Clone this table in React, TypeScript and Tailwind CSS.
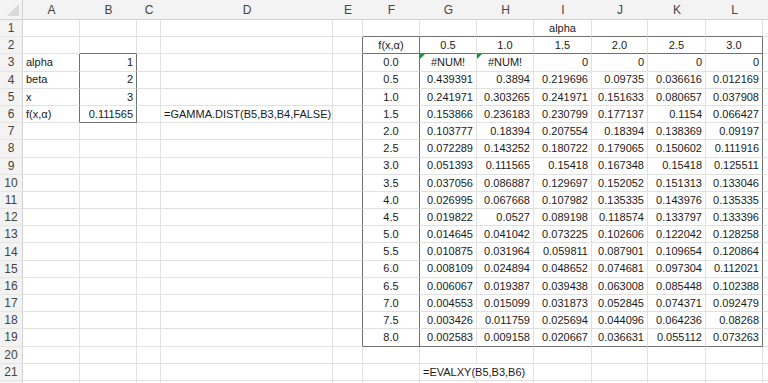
import type { ReactNode } from "react";

const cols = ["A", "B", "C", "D", "E", "F", "G", "H", "I", "J", "K", "L", "M"];

const alphas = ["0.5", "1.0", "1.5", "2.0", "2.5", "3.0"];

// rows 3..19 of the f(x,α) table: x, then one value per alpha
const table: string[][] = [
  ["0.0", "#NUM!", "#NUM!", "0", "0", "0", "0"],
  ["0.5", "0.439391", "0.3894", "0.219696", "0.09735", "0.036616", "0.012169"],
  ["1.0", "0.241971", "0.303265", "0.241971", "0.151633", "0.080657", "0.037908"],
  ["1.5", "0.153866", "0.236183", "0.230799", "0.177137", "0.1154", "0.066427"],
  ["2.0", "0.103777", "0.18394", "0.207554", "0.18394", "0.138369", "0.09197"],
  ["2.5", "0.072289", "0.143252", "0.180722", "0.179065", "0.150602", "0.111916"],
  ["3.0", "0.051393", "0.111565", "0.15418", "0.167348", "0.15418", "0.125511"],
  ["3.5", "0.037056", "0.086887", "0.129697", "0.152052", "0.151313", "0.133046"],
  ["4.0", "0.026995", "0.067668", "0.107982", "0.135335", "0.143976", "0.135335"],
  ["4.5", "0.019822", "0.0527", "0.089198", "0.118574", "0.133797", "0.133396"],
  ["5.0", "0.014645", "0.041042", "0.073225", "0.102606", "0.122042", "0.128258"],
  ["5.5", "0.010875", "0.031964", "0.059811", "0.087901", "0.109654", "0.120864"],
  ["6.0", "0.008109", "0.024894", "0.048652", "0.074681", "0.097304", "0.112021"],
  ["6.5", "0.006067", "0.019387", "0.039438", "0.063008", "0.085448", "0.102388"],
  ["7.0", "0.004553", "0.015099", "0.031873", "0.052845", "0.074371", "0.092479"],
  ["7.5", "0.003426", "0.011759", "0.025694", "0.044096", "0.064236", "0.08268"],
  ["8.0", "0.002583", "0.009158", "0.020667", "0.036631", "0.055112", "0.073263"],
];

const params: Record<number, [string, string]> = {
  3: ["alpha", "1"],
  4: ["beta", "2"],
  5: ["x", "3"],
  6: ["f(x,α)", "0.111565"],
};

type Align = "left" | "right" | "center";

type CellData = { text?: string; align?: Align; warn?: boolean; span?: number };

const tableCols = ["F", "G", "H", "I", "J", "K", "L"];

function getCell(r: number, c: string): CellData | null {
  if (r === 21 && c === "H") return null; // covered by G21
  if (r === 21 && c === "G") return { text: "=EVALXY(B5,B3,B6)", align: "left", span: 2 };
  if (params[r] && c === "A") return { text: params[r][0], align: "left" };
  if (params[r] && c === "B") return { text: params[r][1], align: "right" };
  if (r === 6 && c === "D") return { text: "=GAMMA.DIST(B5,B3,B4,FALSE)", align: "left" };
  if (r === 1 && c === "I") return { text: "alpha", align: "center" };
  if (r === 2 && c === "F") return { text: "f(x,α)", align: "center" };
  if (r === 2 && tableCols.includes(c) && c !== "F")
    return { text: alphas[tableCols.indexOf(c) - 1], align: "center" };
  if (r >= 3 && r <= 19 && tableCols.includes(c)) {
    const row = table[r - 3];
    const i = tableCols.indexOf(c);
    if (i === 0) return { text: row[0], align: "center" };
    const v = row[i];
    if (v === "#NUM!") return { text: v, align: "center", warn: true };
    return { text: v, align: "right" };
  }
  return {};
}

function darkRight(r: number, c: string) {
  if ((c === "A" || c === "B") && r >= 3 && r <= 6) return true;
  if ((c === "E" || c === "F" || c === "L") && r >= 2 && r <= 19) return true;
  return false;
}

function darkBottom(r: number, c: string) {
  if (c === "B" && (r === 2 || r === 6)) return true;
  if (tableCols.includes(c) && (r === 1 || r === 2 || r === 19)) return true;
  return false;
}

const alignClass: Record<Align, string> = {
  left: "justify-start",
  right: "justify-end",
  center: "justify-center",
};

function Cell({ r, c, data }: { r: number; c: string; data: CellData }) {
  const endCol = data.span === 2 ? "H" : c;
  const rightCls = darkRight(r, endCol) ? "border-r-[#727272]" : "border-r-[#e1e1e1]";
  const bottomCls = darkBottom(r, c) ? "border-b-[#727272]" : "border-b-[#e1e1e1]";
  return (
    <div
      className={`relative flex items-center overflow-visible whitespace-nowrap border-r border-b px-[3px] ${rightCls} ${bottomCls} ${
        alignClass[data.align ?? "left"]
      } ${data.span === 2 ? "col-span-2" : ""}`}
    >
      {data.warn && (
        <svg className="absolute left-0 top-0" width="5" height="5" viewBox="0 0 5 5">
          <polygon points="0,0 5,0 0,5" fill="#1f8a3b" />
        </svg>
      )}
      {data.text}
    </div>
  );
}

function RowHeader({ children }: { children: ReactNode }) {
  return (
    <div className="flex items-center justify-center border-r border-b border-r-[#d2d2d2] border-b-[#e6e6e6] bg-[#f3f3f3] text-[12px] text-[#444]">
      {children}
    </div>
  );
}

export default function App() {
  const rows = Array.from({ length: 22 }, (_, i) => i + 1);
  return (
    <div
      className="h-[383px] w-[768px] overflow-hidden bg-white text-[11px] text-[#1a1a1a]"
      style={{ fontFamily: '"Liberation Sans", Arial, sans-serif' }}
    >
      <div className="grid grid-cols-[23px_57px_57px_24px_172px_30px_57px_57px_57px_58px_56px_58px_57px_1fr] grid-rows-[20px] auto-rows-[17.2px]">
        {/* corner */}
        <div className="relative border-r border-b border-r-[#d2d2d2] border-b-[#d2d2d2] bg-[#f3f3f3]">
          <svg className="absolute right-[3px] bottom-[3px]" width="12" height="12" viewBox="0 0 12 12">
            <polygon points="12,0 12,12 0,12" fill="#dadada" />
          </svg>
        </div>
        {cols.map((c) => (
          <div
            key={c}
            className="flex items-center justify-center border-b border-b-[#d2d2d2] bg-[#f3f3f3] text-[12px] text-[#444]"
          >
            {c === "M" ? "" : c}
          </div>
        ))}

        {rows.map((r) => [
          <RowHeader key={`h${r}`}>{r < 22 ? r : ""}</RowHeader>,
          ...cols.map((c) => {
            const data = getCell(r, c);
            if (!data) return null;
            return <Cell key={`${c}${r}`} r={r} c={c} data={data} />;
          }),
        ])}
      </div>
    </div>
  );
}
